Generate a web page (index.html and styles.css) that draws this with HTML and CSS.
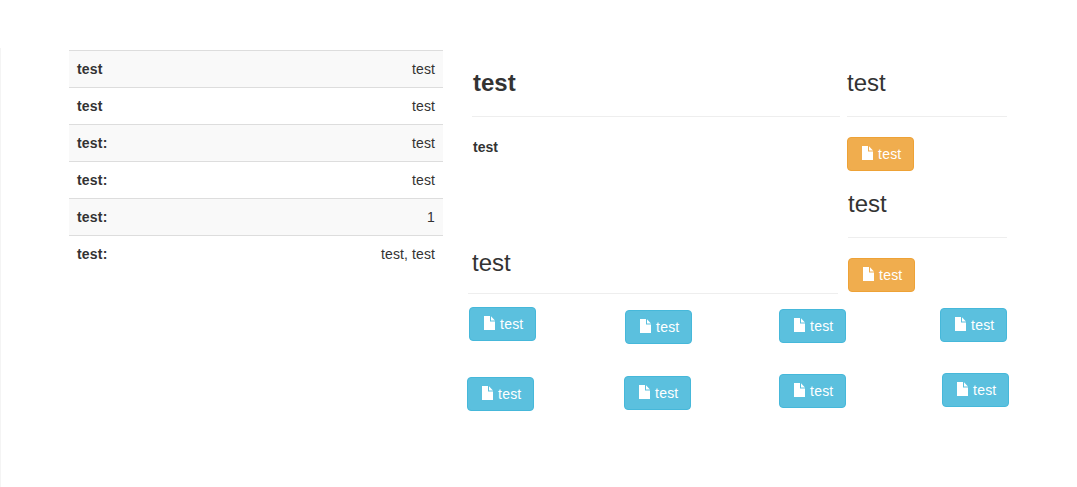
FILE: index.html
```html
<!DOCTYPE html>
<html lang="en">
<head>
<meta charset="utf-8">
<title>test</title>
<link rel="stylesheet" href="styles.css">
</head>
<body>
<svg class="sprite" width="0" height="0" aria-hidden="true"><symbol id="file" viewBox="0 0 14 14"><path d="M2 0H8V5.5H13V14H2Z"/><path d="M9 0.2L13 4.5H9Z"/></symbol></svg>
<div class="page">
  <table class="info">
    <tr><th>test</th><td>test</td></tr>
    <tr><th>test</th><td>test</td></tr>
    <tr><th>test:</th><td>test</td></tr>
    <tr><th>test:</th><td>test</td></tr>
    <tr><th>test:</th><td>1</td></tr>
    <tr><th>test:</th><td>test, test</td></tr>
  </table>
  <div class="content">
    <div class="top">
      <section class="main">
        <h2 class="head head-bold">test</h2>
        <p class="note">test</p>
        <h3 class="head head-low">test</h3>
      </section>
      <section class="side">
        <h3 class="head">test</h3>
        <a class="btn warn"><svg class="icon"><use href="#file"/></svg> test</a>
        <div class="side-second">
          <h3 class="head">test</h3>
          <a class="btn warn"><svg class="icon"><use href="#file"/></svg> test</a>
        </div>
      </section>
    </div>
    <div class="buttons">
      <a class="btn info-btn r1a"><svg class="icon"><use href="#file"/></svg> test</a>
      <a class="btn info-btn r1b"><svg class="icon"><use href="#file"/></svg> test</a>
      <a class="btn info-btn r1c"><svg class="icon"><use href="#file"/></svg> test</a>
      <a class="btn info-btn r1d"><svg class="icon"><use href="#file"/></svg> test</a>
      <a class="btn info-btn r2a"><svg class="icon"><use href="#file"/></svg> test</a>
      <a class="btn info-btn r2b"><svg class="icon"><use href="#file"/></svg> test</a>
      <a class="btn info-btn r2c"><svg class="icon"><use href="#file"/></svg> test</a>
      <a class="btn info-btn r2d"><svg class="icon"><use href="#file"/></svg> test</a>
    </div>
  </div>
</div>
</body>
</html>
```
FILE: styles.css
```css
* { box-sizing: border-box; }
html, body { margin: 0; padding: 0; background: #fff; }
body {
  font-family: "Liberation Sans", Arial, sans-serif;
  font-size: 14px;
  line-height: 20px;
  letter-spacing: 0.2px;
  color: #333;
  height: 487px;
  overflow: hidden;
  padding-top: 48px;
}
.sprite { display: block; }
.page {
  display: flex;
  align-items: flex-start;
  border-left: 1px solid #f4f4f4;
  height: 439px;
  padding: 2px 0 0 68px;
}
.info {
  width: 374px;
  flex: none;
  border-collapse: collapse;
  border-spacing: 0;
}
.info th, .info td {
  padding: 8px;
  height: 37px;
  border-top: 1px solid #ddd;
  font-weight: 400;
  letter-spacing: 0.1px;
  text-align: right;
  vertical-align: top;
}
.info th { text-align: left; font-weight: 700; letter-spacing: 0.2px; }
.info tr:nth-child(odd) { background: #f9f9f9; }
.content { width: 545px; margin-left: 24px; flex: none; }
.top { display: flex; height: 244px; }
.main { width: 373px; margin-right: 7px; flex: none; }
.side { width: 160px; flex: none; }
.side-second { margin: 20px 0 0 1px; }
.head {
  margin: 0;
  padding: 20px 0 20px;
  font-size: 24px;
  font-weight: 400;
  line-height: 26px;
  letter-spacing: 0;
  height: 67px;
  border-bottom: 1px solid #eee;
}
.side-second .head { padding-top: 0; height: 47px; }
.head-bold { font-weight: 700; margin-left: 5px; padding-left: 1px; }
.note { margin: 20px 0 0 6px; font-size: 14px; letter-spacing: 0; font-weight: 700; }
.head-low {
  margin: 93px 2px 0 1px;
  padding: 0 0 17px 4px;
  height: 44px;
}
.btn {
  display: block;
  width: 67px;
  height: 34px;
  margin-top: 20px;
  padding: 6px 12px;
  border: 1px solid transparent;
  border-radius: 4px;
  color: #fff;
  white-space: nowrap;
}
.warn { background: #f0ad4e; border-color: #eea236; }
.info-btn { background: #5bc0de; border-color: #46b8da; margin-top: 0; }
.icon { display: inline-block; width: 14px; height: 14px; fill: #fff; vertical-align: -1px; }
.buttons {
  display: grid;
  grid-template-columns: 157px 155px 161px 70px;
  grid-template-rows: 37px 34px;
  row-gap: 29px;
  margin-top: 13px;
}
.r1a { margin-left: 2px; }
.r1b { margin: 3px 0 0 1px; }
.r1c { margin-top: 2px; }
.r1d { margin-top: 1px; }
.r2a { margin-top: 4px; }
.r2b { margin-top: 3px; }
.r2c { margin-top: 1px; }
.r2d { margin-left: 2px; }
```
